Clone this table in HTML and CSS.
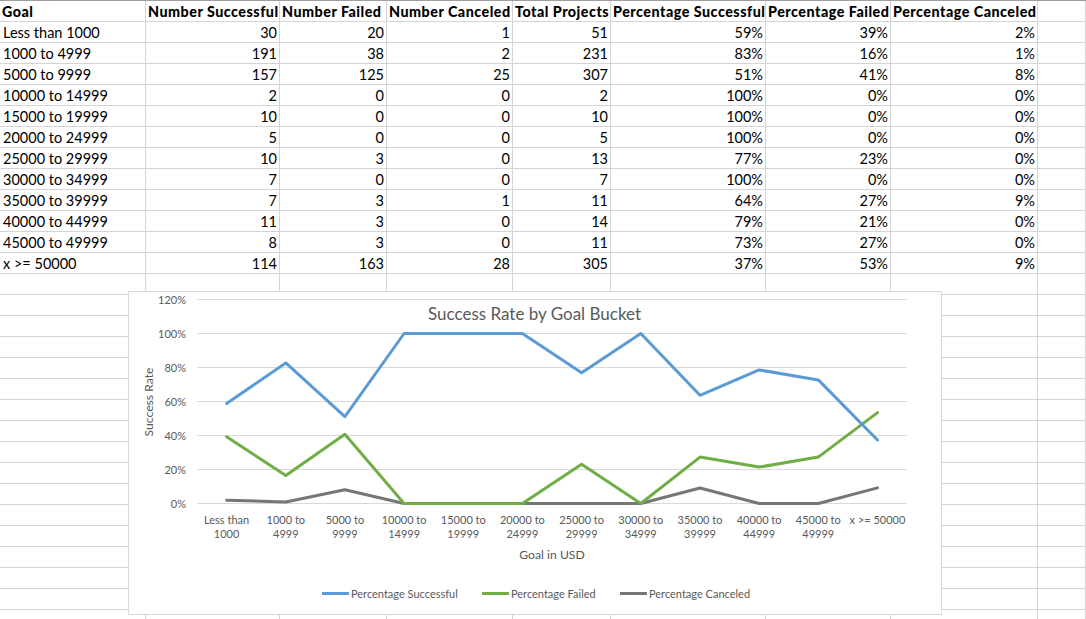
FILE: index.html
```html
<!DOCTYPE html>
<html lang="en">
<head>
<meta charset="utf-8">
<title>Success Rate by Goal Bucket</title>
<link rel="stylesheet" href="styles.css">
</head>
<body>
<div class="sheet">
  <div class="row head"><div class="c">Goal</div><div class="c">Number Successful</div><div class="c">Number Failed</div><div class="c">Number Canceled</div><div class="c">Total Projects</div><div class="c">Percentage Successful</div><div class="c">Percentage Failed</div><div class="c">Percentage Canceled</div><div class="c"></div></div>
  <div class="row"><div class="c">Less than 1000</div><div class="c n">30</div><div class="c n">20</div><div class="c n">1</div><div class="c n">51</div><div class="c n">59%</div><div class="c n">39%</div><div class="c n">2%</div><div class="c"></div></div>
  <div class="row"><div class="c">1000 to 4999</div><div class="c n">191</div><div class="c n">38</div><div class="c n">2</div><div class="c n">231</div><div class="c n">83%</div><div class="c n">16%</div><div class="c n">1%</div><div class="c"></div></div>
  <div class="row"><div class="c">5000 to 9999</div><div class="c n">157</div><div class="c n">125</div><div class="c n">25</div><div class="c n">307</div><div class="c n">51%</div><div class="c n">41%</div><div class="c n">8%</div><div class="c"></div></div>
  <div class="row"><div class="c">10000 to 14999</div><div class="c n">2</div><div class="c n">0</div><div class="c n">0</div><div class="c n">2</div><div class="c n">100%</div><div class="c n">0%</div><div class="c n">0%</div><div class="c"></div></div>
  <div class="row"><div class="c">15000 to 19999</div><div class="c n">10</div><div class="c n">0</div><div class="c n">0</div><div class="c n">10</div><div class="c n">100%</div><div class="c n">0%</div><div class="c n">0%</div><div class="c"></div></div>
  <div class="row"><div class="c">20000 to 24999</div><div class="c n">5</div><div class="c n">0</div><div class="c n">0</div><div class="c n">5</div><div class="c n">100%</div><div class="c n">0%</div><div class="c n">0%</div><div class="c"></div></div>
  <div class="row"><div class="c">25000 to 29999</div><div class="c n">10</div><div class="c n">3</div><div class="c n">0</div><div class="c n">13</div><div class="c n">77%</div><div class="c n">23%</div><div class="c n">0%</div><div class="c"></div></div>
  <div class="row"><div class="c">30000 to 34999</div><div class="c n">7</div><div class="c n">0</div><div class="c n">0</div><div class="c n">7</div><div class="c n">100%</div><div class="c n">0%</div><div class="c n">0%</div><div class="c"></div></div>
  <div class="row"><div class="c">35000 to 39999</div><div class="c n">7</div><div class="c n">3</div><div class="c n">1</div><div class="c n">11</div><div class="c n">64%</div><div class="c n">27%</div><div class="c n">9%</div><div class="c"></div></div>
  <div class="row"><div class="c">40000 to 44999</div><div class="c n">11</div><div class="c n">3</div><div class="c n">0</div><div class="c n">14</div><div class="c n">79%</div><div class="c n">21%</div><div class="c n">0%</div><div class="c"></div></div>
  <div class="row"><div class="c">45000 to 49999</div><div class="c n">8</div><div class="c n">3</div><div class="c n">0</div><div class="c n">11</div><div class="c n">73%</div><div class="c n">27%</div><div class="c n">0%</div><div class="c"></div></div>
  <div class="row"><div class="c">x &gt;= 50000</div><div class="c n">114</div><div class="c n">163</div><div class="c n">28</div><div class="c n">305</div><div class="c n">37%</div><div class="c n">53%</div><div class="c n">9%</div><div class="c"></div></div>
  <div class="row"><div class="c"></div><div class="c"></div><div class="c"></div><div class="c"></div><div class="c"></div><div class="c"></div><div class="c"></div><div class="c"></div><div class="c"></div></div>
  <div class="row"><div class="c"></div><div class="c"></div><div class="c"></div><div class="c"></div><div class="c"></div><div class="c"></div><div class="c"></div><div class="c"></div><div class="c"></div></div>
  <div class="row"><div class="c"></div><div class="c"></div><div class="c"></div><div class="c"></div><div class="c"></div><div class="c"></div><div class="c"></div><div class="c"></div><div class="c"></div></div>
  <div class="row"><div class="c"></div><div class="c"></div><div class="c"></div><div class="c"></div><div class="c"></div><div class="c"></div><div class="c"></div><div class="c"></div><div class="c"></div></div>
  <div class="row"><div class="c"></div><div class="c"></div><div class="c"></div><div class="c"></div><div class="c"></div><div class="c"></div><div class="c"></div><div class="c"></div><div class="c"></div></div>
  <div class="row"><div class="c"></div><div class="c"></div><div class="c"></div><div class="c"></div><div class="c"></div><div class="c"></div><div class="c"></div><div class="c"></div><div class="c"></div></div>
  <div class="row"><div class="c"></div><div class="c"></div><div class="c"></div><div class="c"></div><div class="c"></div><div class="c"></div><div class="c"></div><div class="c"></div><div class="c"></div></div>
  <div class="row"><div class="c"></div><div class="c"></div><div class="c"></div><div class="c"></div><div class="c"></div><div class="c"></div><div class="c"></div><div class="c"></div><div class="c"></div></div>
  <div class="row"><div class="c"></div><div class="c"></div><div class="c"></div><div class="c"></div><div class="c"></div><div class="c"></div><div class="c"></div><div class="c"></div><div class="c"></div></div>
  <div class="row"><div class="c"></div><div class="c"></div><div class="c"></div><div class="c"></div><div class="c"></div><div class="c"></div><div class="c"></div><div class="c"></div><div class="c"></div></div>
  <div class="row"><div class="c"></div><div class="c"></div><div class="c"></div><div class="c"></div><div class="c"></div><div class="c"></div><div class="c"></div><div class="c"></div><div class="c"></div></div>
  <div class="row"><div class="c"></div><div class="c"></div><div class="c"></div><div class="c"></div><div class="c"></div><div class="c"></div><div class="c"></div><div class="c"></div><div class="c"></div></div>
  <div class="row"><div class="c"></div><div class="c"></div><div class="c"></div><div class="c"></div><div class="c"></div><div class="c"></div><div class="c"></div><div class="c"></div><div class="c"></div></div>
  <div class="row"><div class="c"></div><div class="c"></div><div class="c"></div><div class="c"></div><div class="c"></div><div class="c"></div><div class="c"></div><div class="c"></div><div class="c"></div></div>
  <div class="row"><div class="c"></div><div class="c"></div><div class="c"></div><div class="c"></div><div class="c"></div><div class="c"></div><div class="c"></div><div class="c"></div><div class="c"></div></div>
  <div class="row"><div class="c"></div><div class="c"></div><div class="c"></div><div class="c"></div><div class="c"></div><div class="c"></div><div class="c"></div><div class="c"></div><div class="c"></div></div>
  <div class="row"><div class="c"></div><div class="c"></div><div class="c"></div><div class="c"></div><div class="c"></div><div class="c"></div><div class="c"></div><div class="c"></div><div class="c"></div></div>

  <div class="chart">
    <svg class="chart-svg" width="812" height="322" viewBox="129 292 812 322" xmlns="http://www.w3.org/2000/svg">
      <text class="title" x="534.5" y="313" text-anchor="middle" dominant-baseline="central">Success Rate by Goal Bucket</text>
      <g class="grid">
        <line x1="197" y1="299.5" x2="907" y2="299.5"/>
        <line x1="197" y1="333.5" x2="907" y2="333.5"/>
        <line x1="197" y1="367.5" x2="907" y2="367.5"/>
        <line x1="197" y1="401.5" x2="907" y2="401.5"/>
        <line x1="197" y1="435.5" x2="907" y2="435.5"/>
        <line x1="197" y1="469.5" x2="907" y2="469.5"/>
        <line x1="197" y1="503.5" x2="907" y2="503.5"/>
      </g>
      <g class="ylab" text-anchor="end" dominant-baseline="central">
        <text x="186" y="299.5">120%</text>
        <text x="186" y="333.5">100%</text>
        <text x="186" y="367.5">80%</text>
        <text x="186" y="401.5">60%</text>
        <text x="186" y="435.5">40%</text>
        <text x="186" y="469.5">20%</text>
        <text x="186" y="503.5">0%</text>
      </g>
      <text class="axtitle" x="148" y="402" text-anchor="middle" dominant-baseline="central" transform="rotate(-90 148 402)">Success Rate</text>
      <g class="xlab" text-anchor="middle" dominant-baseline="central">
        <text x="226.6" y="519.5">Less than</text><text x="226.6" y="533.5">1000</text>
        <text x="285.8" y="519.5">1000 to</text><text x="285.8" y="533.5">4999</text>
        <text x="344.9" y="519.5">5000 to</text><text x="344.9" y="533.5">9999</text>
        <text x="404.1" y="519.5">10000 to</text><text x="404.1" y="533.5">14999</text>
        <text x="463.3" y="519.5">15000 to</text><text x="463.3" y="533.5">19999</text>
        <text x="522.4" y="519.5">20000 to</text><text x="522.4" y="533.5">24999</text>
        <text x="581.6" y="519.5">25000 to</text><text x="581.6" y="533.5">29999</text>
        <text x="640.8" y="519.5">30000 to</text><text x="640.8" y="533.5">34999</text>
        <text x="700.0" y="519.5">35000 to</text><text x="700.0" y="533.5">39999</text>
        <text x="759.1" y="519.5">40000 to</text><text x="759.1" y="533.5">44999</text>
        <text x="818.3" y="519.5">45000 to</text><text x="818.3" y="533.5">49999</text>
        <text x="877.5" y="519.5">x &gt;= 50000</text>
      </g>
      <text class="axtitle" x="552" y="554" text-anchor="middle" dominant-baseline="central">Goal in USD</text>
      <polyline class="s-can" points="226.6,500.2 285.8,502.0 344.9,489.7 404.1,503.5 463.3,503.5 522.4,503.5 581.6,503.5 640.8,503.5 700.0,488.0 759.1,503.5 818.3,503.5 877.5,487.9"/>
      <polyline class="s-fail" points="226.6,436.8 285.8,475.5 344.9,434.3 404.1,503.5 463.3,503.5 522.4,503.5 581.6,464.3 640.8,503.5 700.0,457.1 759.1,467.1 818.3,457.1 877.5,412.6"/>
      <polyline class="s-succ" points="226.6,403.5 285.8,362.9 344.9,416.6 404.1,333.5 463.3,333.5 522.4,333.5 581.6,372.7 640.8,333.5 700.0,395.3 759.1,369.9 818.3,379.9 877.5,440.0"/>
      <g class="legend" dominant-baseline="central">
        <line class="s-succ" x1="322" y1="593.5" x2="349" y2="593.5"/>
        <text x="351" y="593.5">Percentage Successful</text>
        <line class="s-fail" x1="482" y1="593.5" x2="509" y2="593.5"/>
        <text x="511" y="593.5">Percentage Failed</text>
        <line class="s-can" x1="620" y1="593.5" x2="647" y2="593.5"/>
        <text x="649" y="593.5">Percentage Canceled</text>
      </g>
    </svg>
  </div>
</div>
</body>
</html>
```

FILE: styles.css
```css
html, body {
  margin: 0;
  padding: 0;
  background: #ffffff;
  overflow: hidden;
}

body {
  font-family: "Lato", "Liberation Sans", sans-serif;
  color: #000000;
  width: 1086px;
  height: 619px;
}

.sheet {
  position: relative;
  border-top: 1px solid #9f9f9f;
  height: 618px;
  overflow: hidden;
}

.row {
  display: grid;
  grid-template-columns: 146px 134px 107px 126px 98px 155px 125px 147px 1fr;
  height: 21px;
}

.c {
  box-sizing: border-box;
  height: 21px;
  border-right: 1px solid #d4d4d4;
  border-bottom: 1px solid #d4d4d4;
  padding: 0 2px 0 3px;
  font-size: 14.5px;
  line-height: 21px;
  white-space: nowrap;
  overflow: hidden;
}

.head .c {
  font-weight: 900;
  font-size: 14.3px;
  letter-spacing: 0.5px;
  padding-left: 2px;
}

.c.n {
  text-align: right;
}

.chart {
  position: absolute;
  left: 128px;
  top: 290px;
  width: 812px;
  height: 322px;
  border: 1px solid #d9d9d9;
  background: #ffffff;
}

.chart-svg {
  display: block;
  font-family: "Lato", "Liberation Sans", sans-serif;
}

.title {
  font-size: 17px;
  fill: #595959;
}

.grid line {
  stroke: #d9d9d9;
  stroke-width: 1;
}

.ylab text,
.xlab text,
.legend text {
  font-size: 11px;
  fill: #595959;
}

.axtitle {
  font-size: 12.2px;
  fill: #595959;
}

.s-succ,
.s-fail,
.s-can {
  fill: none;
  stroke-width: 3;
  stroke-linejoin: round;
  stroke-linecap: round;
}

.legend line {
  stroke-linecap: butt;
}

.s-succ { stroke: #5b9bd5; }
.s-fail { stroke: #70ad47; }
.s-can { stroke: #767676; }
```
